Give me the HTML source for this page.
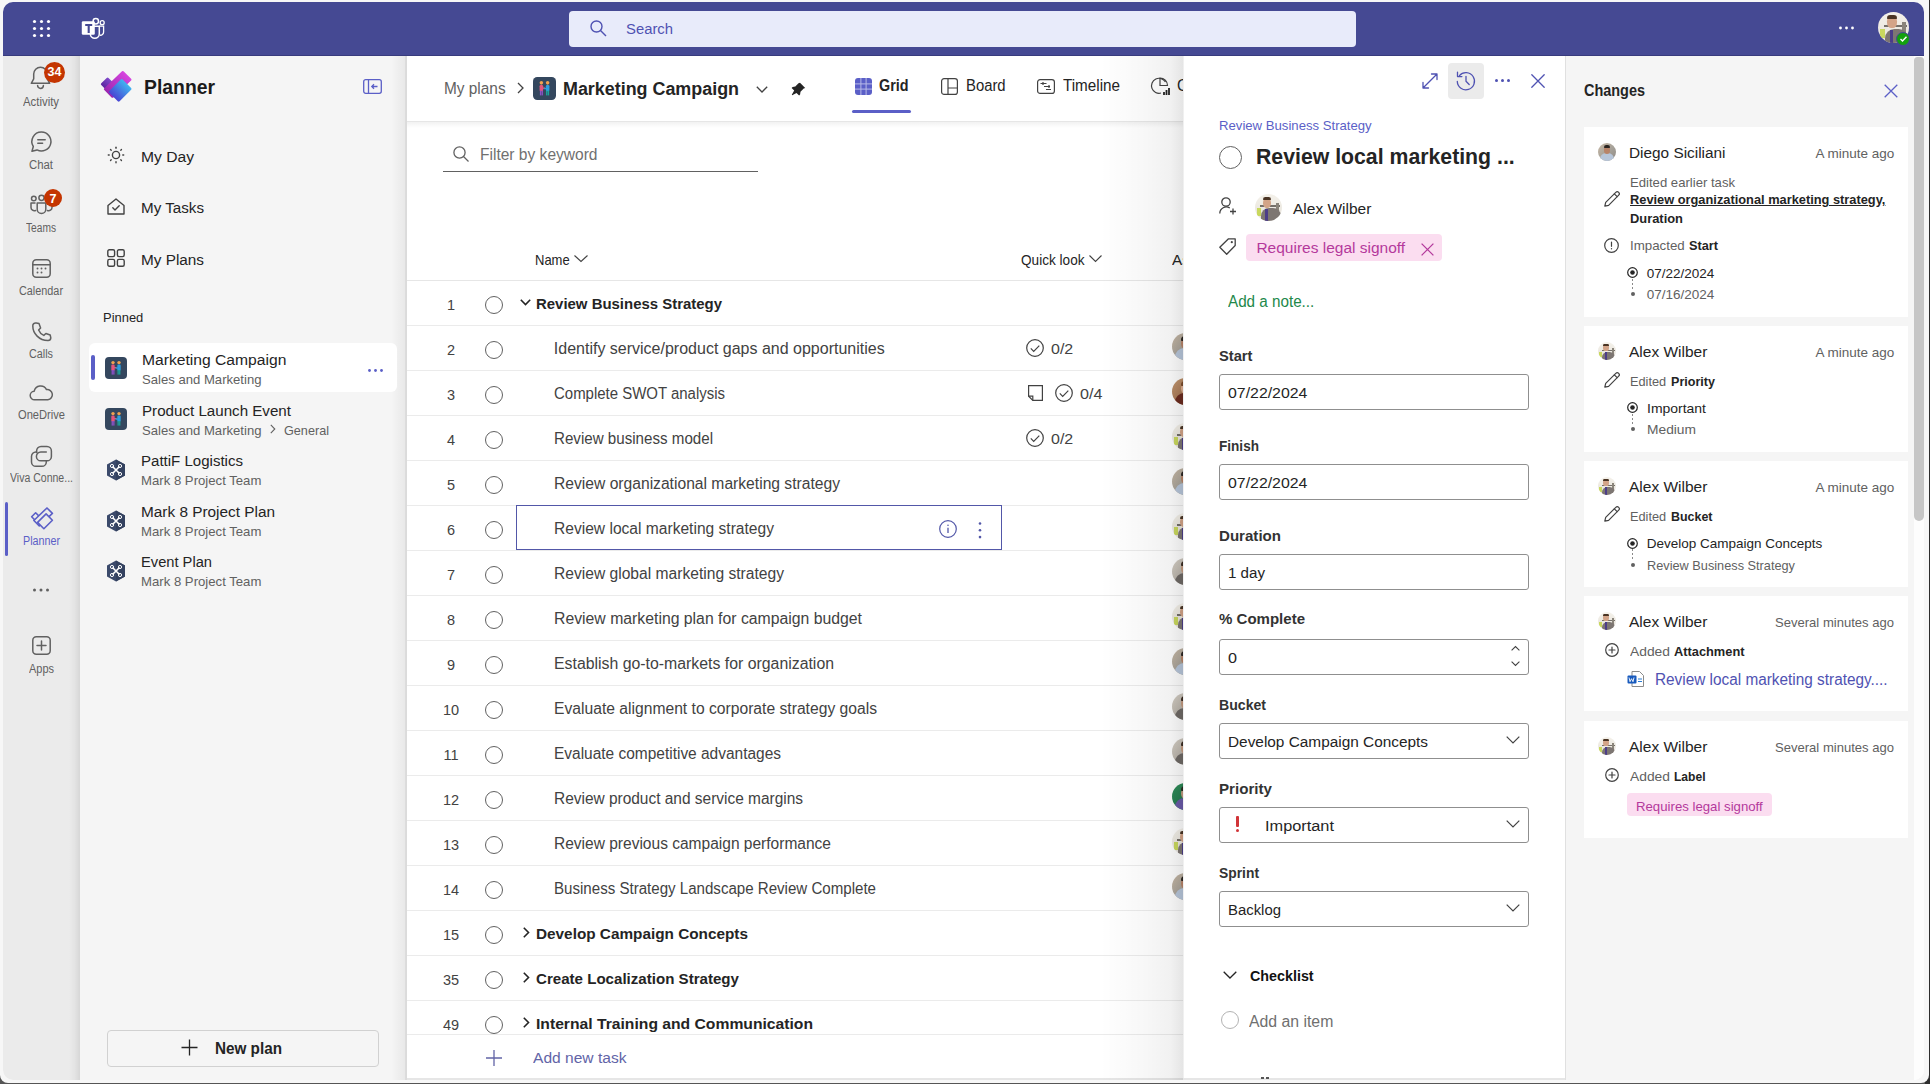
<!DOCTYPE html>
<html><head><meta charset="utf-8">
<style>
*{box-sizing:border-box;margin:0;padding:0}
html,body{width:1930px;height:1084px;overflow:hidden}
body{position:relative;background:#f7f7f7;font-family:"Liberation Sans",sans-serif;color:#242424}
.a{position:absolute}
.t{position:absolute;white-space:nowrap;line-height:1;transform-origin:0 0}
svg{position:absolute;overflow:visible}
</style></head><body>

<div class="a" style="left:0px;top:0px;width:1930px;height:1084px;background:#555"></div>
<div class="a" style="left:1925px;top:0px;width:5px;height:1084px;background:#2e2e2e"></div>
<div class="a" style="left:0px;top:0px;width:1929px;height:1083px;background:#f7f7f7;border-radius:0 0 8px 8px"></div>
<div class="a" style="left:3px;top:2px;width:1921px;height:1078px;border-radius:10px;overflow:hidden;background:#fff">
<div class="a" style="left:0px;top:0px;width:1921px;height:53px;background:#454993"></div>
<div class="a" style="left:0px;top:53px;width:1921px;height:1px;background:#383b7d"></div>
<div class="a" style="left:0px;top:54px;width:77px;height:1024px;background:#ebebeb"></div>
<div class="a" style="left:66px;top:54px;width:11px;height:1024px;background:linear-gradient(90deg,rgba(0,0,0,0),rgba(0,0,0,.03) 50%,rgba(0,0,0,.085))"></div>
<div class="a" style="left:77px;top:54px;width:327px;height:1024px;background:#f5f5f5"></div>
<div class="a" style="left:388px;top:54px;width:16px;height:1024px;background:linear-gradient(90deg,rgba(0,0,0,0),rgba(0,0,0,.06))"></div>
<div class="a" style="left:402px;top:54px;width:2px;height:1024px;background:rgba(0,0,0,.05)"></div>
<div class="a" style="left:404px;top:54px;width:776px;height:1024px;background:#fff"></div>
<div class="a" style="left:1562px;top:54px;width:349px;height:1024px;background:#f5f5f5"></div>
<div class="a" style="left:1562px;top:54px;width:1px;height:1024px;background:#e0e0e0"></div>
<div class="a" style="left:1911px;top:54px;width:10px;height:1024px;background:#fdfdfd"></div>
<div class="a" style="left:1911px;top:55px;width:10px;height:464px;background:#c6c6c6;border-radius:3.5px 3.5px 5px 5px"></div>
</div>
<svg style="left:33px;top:20px" width="17" height="17" viewBox="0 0 17 17" ><circle cx="1.5" cy="1.5" r="1.6" fill="#fff"/><circle cx="1.5" cy="8.5" r="1.6" fill="#fff"/><circle cx="1.5" cy="15.5" r="1.6" fill="#fff"/><circle cx="8.5" cy="1.5" r="1.6" fill="#fff"/><circle cx="8.5" cy="8.5" r="1.6" fill="#fff"/><circle cx="8.5" cy="15.5" r="1.6" fill="#fff"/><circle cx="15.5" cy="1.5" r="1.6" fill="#fff"/><circle cx="15.5" cy="8.5" r="1.6" fill="#fff"/><circle cx="15.5" cy="15.5" r="1.6" fill="#fff"/></svg>
<svg style="left:80px;top:17px" width="25" height="23" viewBox="0 0 25 23" fill="none"><circle cx="15.8" cy="4.2" r="2.7" stroke="#fff" stroke-width="1.5"/><circle cx="22.2" cy="5.7" r="2" stroke="#fff" stroke-width="1.3"/>
<path d="M14 9.2H19.3V16.8A4.5 4.5 0 0 1 10.3 16.8" stroke="#fff" stroke-width="1.5"/><path d="M19.3 9.2H23.6V15A3.2 3.2 0 0 1 19.8 18.2" stroke="#fff" stroke-width="1.3"/>
<rect x="1.8" y="4.3" width="13" height="13.5" rx="1.3" fill="#fff"/><path d="M5.2 8H12.2M8.7 8V16" stroke="#454993" stroke-width="2.1"/></svg>
<div class="a" style="left:569px;top:11px;width:787px;height:36px;background:#e8ebfa;border-radius:4px"></div>
<svg style="left:590px;top:20px" width="17" height="17" viewBox="0 0 17 17" fill="none"><circle cx="6.5" cy="6.5" r="5.5" stroke="#4f52b2" stroke-width="1.4"/><path d="M10.5 10.5l5.5 5.5" stroke="#4f52b2" stroke-width="1.4"/></svg>
<div class="t" style="left:626.0px;top:20.9px;font-size:15.5px;color:#4f52b2;font-weight:400;transform:scaleX(0.9567);">Search</div>
<svg style="left:1839px;top:26px" width="15" height="4" viewBox="0 0 15 4" fill="none"><circle cx="1.5" cy="2" r="1.4" fill="#fff"/><circle cx="7.5" cy="2" r="1.4" fill="#fff"/><circle cx="13.5" cy="2" r="1.4" fill="#fff"/></svg>
<div class="a" style="left:1878px;top:12px;width:31px;height:31px;border-radius:50%;overflow:hidden;background:linear-gradient(180deg,#f4f1ea,#e6e2da)"><div class="a" style="left:2.1px;top:16.5px;width:5.2px;height:9.3px;background:#c9d85e"></div><div class="a" style="left:6.2px;top:12.9px;width:22.7px;height:2.3px;background:#75706a"></div><div class="a" style="left:23.8px;top:10.3px;width:4.1px;height:12.4px;background:#8a847a"></div><div class="a" style="left:7.2px;top:16.5px;width:22.7px;height:16.5px;background:#7d7672;border-radius:9.3px 9.3px 0 0"></div><div class="a" style="left:11.9px;top:17.6px;width:3.3px;height:13.4px;background:#4c3d88"></div><div class="a" style="left:9.3px;top:4.1px;width:9.3px;height:11.9px;background:#d3a488;border-radius:45%"></div><div class="a" style="left:9.3px;top:3.1px;width:9.3px;height:4.1px;background:#4a3424;border-radius:4.1px 4.1px 1px 1px"></div></div>
<div class="a" style="left:1896px;top:32px;width:14px;height:14px;background:#13a10e;border-radius:50%;border:1.5px solid #454993"></div>
<svg style="left:1900px;top:36px" width="7" height="6" viewBox="0 0 7 6" fill="none"><path d="M0.5 3l2 2 4-4.2" stroke="#fff" stroke-width="1.4"/></svg>
<svg style="left:30px;top:66px" width="21" height="23" viewBox="0 0 21 23" fill="none"><path d="M10.5 1.2a6.8 6.8 0 0 0-6.8 6.8v4.8L1.3 17.3h18.4l-2.4-4.5V8a6.8 6.8 0 0 0-6.8-6.8z" stroke="#616161" stroke-width="1.5" stroke-linejoin="round" stroke-linecap="round"/><path d="M7.6 19.5a2.9 2.9 0 0 0 5.8 0" stroke="#616161" stroke-width="1.5" stroke-linejoin="round" stroke-linecap="round"/></svg>
<div class="a" style="left:44px;top:62px;width:21px;height:21px;background:#c43501;border-radius:50%"></div>
<div class="t" style="left:47.5px;top:66.4px;font-size:12.5px;color:#fff;font-weight:700;">34</div>
<div class="t" style="left:23.0px;top:96.1px;font-size:12.3px;color:#616161;font-weight:400;transform:scaleX(0.9242);">Activity</div>
<svg style="left:31px;top:131px" width="21" height="21" viewBox="0 0 21 21" fill="none"><path d="M10.5 1a9.5 9.5 0 1 1-4.5 17.9L1 20.2l1.3-4.7A9.5 9.5 0 0 1 10.5 1z" stroke="#616161" stroke-width="1.5" stroke-linejoin="round" stroke-linecap="round"/><path d="M6.8 8.8h7.4M6.8 12.3h4.8" stroke="#616161" stroke-width="1.5" stroke-linejoin="round" stroke-linecap="round"/></svg>
<div class="t" style="left:29.0px;top:159.1px;font-size:12.3px;color:#616161;font-weight:400;transform:scaleX(0.9236);">Chat</div>
<svg style="left:30px;top:195px" width="23" height="20" viewBox="0 0 23 20" fill="none"><circle cx="3.8" cy="3.5" r="2.3" stroke="#616161" stroke-width="1.5" stroke-linejoin="round" stroke-linecap="round"/><circle cx="11.5" cy="2.8" r="2.6" stroke="#616161" stroke-width="1.5" stroke-linejoin="round" stroke-linecap="round"/><path d="M7.2 8h8.6v6.2a4.3 4.3 0 0 1-8.6 0z" stroke="#616161" stroke-width="1.5" stroke-linejoin="round" stroke-linecap="round"/><path d="M5 8H1v4.5a3.3 3.3 0 0 0 4.6 3" stroke="#616161" stroke-width="1.5" stroke-linejoin="round" stroke-linecap="round"/><path d="M18 8h4v4.5a3.3 3.3 0 0 1-4.6 3" stroke="#616161" stroke-width="1.5" stroke-linejoin="round" stroke-linecap="round"/></svg>
<div class="a" style="left:44px;top:189px;width:18px;height:18px;background:#c43501;border-radius:50%"></div>
<div class="t" style="left:49.5px;top:192.9px;font-size:12.5px;color:#fff;font-weight:700;">7</div>
<div class="t" style="left:26.0px;top:222.1px;font-size:12.3px;color:#616161;font-weight:400;transform:scaleX(0.8283);">Teams</div>
<svg style="left:32px;top:259px" width="19" height="19" viewBox="0 0 19 19" fill="none"><rect x="0.8" y="0.8" width="17.4" height="17.4" rx="3.5" stroke="#616161" stroke-width="1.5" stroke-linejoin="round" stroke-linecap="round"/><path d="M0.8 5.8h17.4" stroke="#616161" stroke-width="1.5" stroke-linejoin="round" stroke-linecap="round"/><circle cx="5.5" cy="9.5" r=".95" fill="#616161"/><circle cx="9.5" cy="9.5" r=".95" fill="#616161"/><circle cx="13.5" cy="9.5" r=".95" fill="#616161"/><circle cx="5.5" cy="13.5" r=".95" fill="#616161"/><circle cx="9.5" cy="13.5" r=".95" fill="#616161"/></svg>
<div class="t" style="left:19.0px;top:285.1px;font-size:12.3px;color:#616161;font-weight:400;transform:scaleX(0.8817);">Calendar</div>
<svg style="left:32px;top:322px" width="19" height="20" viewBox="0 0 19 20" fill="none"><path d="M4.2 1l2.8.6 1.6 4.3-2 2.1a10 10 0 0 0 5.2 5.4l2.1-1.9 4.3 1.5.6 2.9a2.8 2.8 0 0 1-2.9 2.6C7.3 18.5 0.8 11.6 0.8 4a2.8 2.8 0 0 1 3.4-3z" stroke="#616161" stroke-width="1.5" stroke-linejoin="round" stroke-linecap="round"/></svg>
<div class="t" style="left:29.0px;top:348.1px;font-size:12.3px;color:#616161;font-weight:400;transform:scaleX(0.8777);">Calls</div>
<svg style="left:29px;top:385px" width="24" height="16" viewBox="0 0 24 16" fill="none"><path d="M5.8 14.8a4.3 4.3 0 0 1-.6-8.6A6.6 6.6 0 0 1 17.5 4.6a5.1 5.1 0 0 1 1.4 10.2z" stroke="#616161" stroke-width="1.5" stroke-linejoin="round" stroke-linecap="round"/></svg>
<div class="t" style="left:17.5px;top:409.1px;font-size:12.3px;color:#616161;font-weight:400;transform:scaleX(0.9047);">OneDrive</div>
<svg style="left:31px;top:446px" width="21" height="21" viewBox="0 0 21 21" fill="none"><path d="M5.6 6.5V4.9A4.4 4.4 0 0 1 10 0.5H16A4.4 4.4 0 0 1 20.4 4.9V10.4A4.4 4.4 0 0 1 16 14.8H9.8A4.4 4.4 0 0 1 9.8 6H15.3" stroke="#616161" stroke-width="1.5" stroke-linejoin="round" stroke-linecap="round"/><path d="M15.3 14.8V15.9A4.4 4.4 0 0 1 10.9 20.3H4.9A4.4 4.4 0 0 1 0.5 15.9V10.4A4.4 4.4 0 0 1 4.9 6H5.6" stroke="#616161" stroke-width="1.5" stroke-linejoin="round" stroke-linecap="round"/></svg>
<div class="t" style="left:9.5px;top:472.1px;font-size:12.3px;color:#616161;font-weight:400;transform:scaleX(0.8559);">Viva Conne...</div>
<div class="a" style="left:5px;top:502px;width:3px;height:54px;background:#5b5fc7;border-radius:2px"></div>
<svg style="left:30px;top:507px" width="24" height="24" viewBox="0 0 24 24" fill="none"><path d="M1.63 9.79L5.64 5.79L10.76 10.91L6.75 14.91z" fill="#ebebeb" stroke="#5b5fc7" stroke-width="1.6" stroke-linejoin="round" stroke-linecap="round"/><path d="M3.86 13.50L16.99 0.96L22.41 6.38L9.27 18.92z" fill="#ebebeb" stroke="#5b5fc7" stroke-width="1.6" stroke-linejoin="round" stroke-linecap="round"/><path d="M7.57 15.43L16.10 6.90L22.41 13.21L13.87 21.74z" fill="#ebebeb" stroke="#5b5fc7" stroke-width="1.6" stroke-linejoin="round" stroke-linecap="round"/></svg>
<div class="t" style="left:22.5px;top:535.1px;font-size:12.3px;color:#5b5fc7;font-weight:400;transform:scaleX(0.8728);">Planner</div>
<svg style="left:33px;top:588px" width="16" height="4" viewBox="0 0 16 4" fill="none"><circle cx="1.5" cy="2" r="1.5" fill="#616161"/><circle cx="8.0" cy="2" r="1.5" fill="#616161"/><circle cx="14.5" cy="2" r="1.5" fill="#616161"/></svg>
<svg style="left:32px;top:636px" width="19" height="19" viewBox="0 0 19 19" fill="none"><rect x="0.8" y="0.8" width="17.4" height="17.4" rx="3.5" stroke="#616161" stroke-width="1.5" stroke-linejoin="round" stroke-linecap="round"/><path d="M9.5 5v9M5 9.5h9" stroke="#616161" stroke-width="1.5" stroke-linejoin="round" stroke-linecap="round"/></svg>
<div class="t" style="left:28.5px;top:663.1px;font-size:12.3px;color:#616161;font-weight:400;transform:scaleX(0.8919);">Apps</div>
<svg style="left:100px;top:71px" width="32" height="31" viewBox="0 0 32 31" ><defs>
<linearGradient id="pl1" x1="0" y1="1" x2="1" y2="0"><stop offset="0" stop-color="#4e1a8f"/><stop offset="1" stop-color="#8f55dc"/></linearGradient>
<linearGradient id="pl2" x1="0" y1="1" x2="1" y2="0"><stop offset="0" stop-color="#9121a8"/><stop offset="1" stop-color="#e04ae6"/></linearGradient>
<linearGradient id="pl3" x1="0" y1="1" x2="1" y2="0"><stop offset="0" stop-color="#4a28cc"/><stop offset="1" stop-color="#3fd0f8"/></linearGradient>
</defs>
<path d="M2.2 13.2L7.6 7.8L14.5 14.7L9.1 20.1z" fill="url(#pl1)" stroke="url(#pl1)" stroke-width="2.6" stroke-linejoin="round"/>
<path d="M5.2 18.2L22.9 1.3L30.2 8.6L12.5 25.5z" fill="url(#pl2)" stroke="url(#pl2)" stroke-width="2.6" stroke-linejoin="round"/>
<path d="M10.2 20.8L21.7 9.3L30.2 17.8L18.7 29.3z" fill="url(#pl3)" stroke="url(#pl3)" stroke-width="2.6" stroke-linejoin="round"/></svg>
<div class="t" style="left:144.0px;top:78.2px;font-size:19.5px;color:#1b1b1b;font-weight:700;transform:scaleX(0.9926);">Planner</div>
<svg style="left:363px;top:79px" width="19" height="15" viewBox="0 0 19 15" fill="none"><rect x="0.7" y="0.7" width="17.6" height="13.6" rx="2" stroke="#5b5fc7" stroke-width="1.3"/><path d="M5.5 1v13" stroke="#5b5fc7" stroke-width="1.3"/><path d="M14.5 7.5H9M11 5.3l-2.2 2.2 2.2 2.2" stroke="#5b5fc7" stroke-width="1.3"/></svg>
<svg style="left:107px;top:146px" width="18" height="18" viewBox="0 0 18 18" fill="none"><circle cx="9" cy="9" r="3.6" stroke="#424242" stroke-width="1.4" stroke-linecap="round" stroke-linejoin="round"/><path d="M15.80 9.00l0.90 0.00" stroke="#424242" stroke-width="1.4" stroke-linecap="round" stroke-linejoin="round"/><path d="M2.20 9.00l-0.90 0.00" stroke="#424242" stroke-width="1.4" stroke-linecap="round" stroke-linejoin="round"/><path d="M9.00 15.80l0.00 0.90" stroke="#424242" stroke-width="1.4" stroke-linecap="round" stroke-linejoin="round"/><path d="M9.00 2.20l0.00 -0.90" stroke="#424242" stroke-width="1.4" stroke-linecap="round" stroke-linejoin="round"/><path d="M13.81 13.81l0.64 0.64" stroke="#424242" stroke-width="1.4" stroke-linecap="round" stroke-linejoin="round"/><path d="M4.19 13.81l-0.64 0.64" stroke="#424242" stroke-width="1.4" stroke-linecap="round" stroke-linejoin="round"/><path d="M13.81 4.19l0.64 -0.64" stroke="#424242" stroke-width="1.4" stroke-linecap="round" stroke-linejoin="round"/><path d="M4.19 4.19l-0.64 -0.64" stroke="#424242" stroke-width="1.4" stroke-linecap="round" stroke-linejoin="round"/></svg>
<div class="t" style="left:141.0px;top:148.9px;font-size:15.5px;color:#242424;font-weight:400;transform:scaleX(1.0086);">My Day</div>
<svg style="left:107px;top:198px" width="18" height="17" viewBox="0 0 18 17" fill="none"><path d="M1 7.5L9 1l8 6.5V16H1z" stroke="#424242" stroke-width="1.4" stroke-linecap="round" stroke-linejoin="round"/><path d="M5.8 9.8l2.2 2.2 4.2-4.2" stroke="#424242" stroke-width="1.4" stroke-linecap="round" stroke-linejoin="round"/></svg>
<div class="t" style="left:141.0px;top:199.9px;font-size:15.5px;color:#242424;font-weight:400;transform:scaleX(0.9796);">My Tasks</div>
<svg style="left:107px;top:249px" width="18" height="18" viewBox="0 0 18 18" fill="none"><rect x="0.8" y="0.8" width="6.8" height="6.8" rx="1.5" stroke="#424242" stroke-width="1.4" stroke-linecap="round" stroke-linejoin="round"/><rect x="10.4" y="0.8" width="6.8" height="6.8" rx="1.5" stroke="#424242" stroke-width="1.4" stroke-linecap="round" stroke-linejoin="round"/><rect x="0.8" y="10.4" width="6.8" height="6.8" rx="1.5" stroke="#424242" stroke-width="1.4" stroke-linecap="round" stroke-linejoin="round"/><rect x="10.4" y="10.4" width="6.8" height="6.8" rx="1.5" stroke="#424242" stroke-width="1.4" stroke-linecap="round" stroke-linejoin="round"/></svg>
<div class="t" style="left:141.0px;top:251.9px;font-size:15.5px;color:#242424;font-weight:400;transform:scaleX(0.9882);">My Plans</div>
<div class="t" style="left:103.0px;top:310.8px;font-size:13px;color:#242424;font-weight:400;transform:scaleX(0.9954);">Pinned</div>
<div class="a" style="left:89px;top:343px;width:308px;height:49px;background:#fff;border-radius:6px"></div>
<div class="a" style="left:91px;top:355px;width:4px;height:25px;background:#5b5fc7;border-radius:2px"></div>
<svg style="left:105px;top:357px" width="22" height="22" viewBox="0 0 22 22" fill="none"><rect x="0" y="0" width="22" height="22" rx="4" fill="#34475e"/>
<circle cx="8" cy="5.6" r="1.7" fill="#f2a24e"/><circle cx="14" cy="5.6" r="1.7" fill="#f2a24e"/>
<rect x="6.3" y="7.6" width="3.4" height="6" rx="1.2" fill="#e2557d"/><rect x="9" y="10" width="2.6" height="1.3" fill="#e2557d"/>
<rect x="6.6" y="13" width="1.3" height="4.6" fill="#8c52c8"/><rect x="8.2" y="13" width="1.3" height="4.6" fill="#8c52c8"/>
<rect x="12.3" y="7.6" width="3.4" height="6" rx="1.2" fill="#2e9ee0"/><rect x="10.6" y="10.4" width="2.4" height="1.3" fill="#2e9ee0"/>
<rect x="12.5" y="13" width="1.3" height="4.6" fill="#1ba59c"/><rect x="14.1" y="13" width="1.3" height="4.6" fill="#1ba59c"/></svg>
<div class="t" style="left:141.5px;top:351.9px;font-size:15.5px;color:#242424;font-weight:400;transform:scaleX(1.0097);">Marketing Campaign</div>
<div class="t" style="left:141.5px;top:372.6px;font-size:13px;color:#616161;font-weight:400;transform:scaleX(1.0083);">Sales and Marketing</div>
<svg style="left:368px;top:369px" width="15" height="3" viewBox="0 0 15 3" fill="none"><circle cx="1.5" cy="1.5" r="1.4" fill="#5b5fc7"/><circle cx="7.5" cy="1.5" r="1.4" fill="#5b5fc7"/><circle cx="13.5" cy="1.5" r="1.4" fill="#5b5fc7"/></svg>
<svg style="left:105px;top:408px" width="22" height="22" viewBox="0 0 22 22" fill="none"><rect x="0" y="0" width="22" height="22" rx="4" fill="#34475e"/>
<circle cx="8" cy="5.6" r="1.7" fill="#f2a24e"/><circle cx="14" cy="5.6" r="1.7" fill="#f2a24e"/>
<rect x="6.3" y="7.6" width="3.4" height="6" rx="1.2" fill="#e2557d"/><rect x="9" y="10" width="2.6" height="1.3" fill="#e2557d"/>
<rect x="6.6" y="13" width="1.3" height="4.6" fill="#8c52c8"/><rect x="8.2" y="13" width="1.3" height="4.6" fill="#8c52c8"/>
<rect x="12.3" y="7.6" width="3.4" height="6" rx="1.2" fill="#2e9ee0"/><rect x="10.6" y="10.4" width="2.4" height="1.3" fill="#2e9ee0"/>
<rect x="12.5" y="13" width="1.3" height="4.6" fill="#1ba59c"/><rect x="14.1" y="13" width="1.3" height="4.6" fill="#1ba59c"/></svg>
<div class="t" style="left:141.5px;top:402.9px;font-size:15.5px;color:#242424;font-weight:400;transform:scaleX(0.9768);">Product Launch Event</div>
<div class="t" style="left:141.5px;top:423.6px;font-size:13px;color:#616161;font-weight:400;transform:scaleX(1.0083);">Sales and Marketing</div>
<svg style="left:270px;top:424px" width="6" height="10" viewBox="0 0 6 10" fill="none"><path d="M0.8 0.8l4 4.2-4 4.2" stroke="#616161" stroke-width="1.1"/></svg>
<div class="t" style="left:283.5px;top:423.6px;font-size:13px;color:#616161;font-weight:400;transform:scaleX(0.9730);">General</div>
<svg style="left:106px;top:459.0px" width="20" height="22" viewBox="0 0 20 22" fill="none"><path d="M10 0.5l9 5v11l-9 5-9-5v-11z" fill="#3b4a6b"/><path d="M10 0.5l9 5v11l-9 5z" fill="#33415f"/>
<path d="M6.5 7.5l7 7M13.5 7.5l-7 7" stroke="#fff" stroke-width="1.6"/>
<circle cx="6" cy="7" r="1.6" stroke="#fff" stroke-width="1"/><circle cx="14" cy="7" r="1.6" stroke="#fff" stroke-width="1"/><circle cx="6" cy="15" r="1.6" stroke="#fff" stroke-width="1"/><circle cx="14" cy="15" r="1.6" stroke="#fff" stroke-width="1"/></svg>
<div class="t" style="left:141.3px;top:453.2px;font-size:15.5px;color:#242424;font-weight:400;transform:scaleX(0.9704);">PattiF Logistics</div>
<div class="t" style="left:141.3px;top:474.1px;font-size:13px;color:#616161;font-weight:400;transform:scaleX(1.0120);">Mark 8 Project Team</div>
<svg style="left:106px;top:509.6px" width="20" height="22" viewBox="0 0 20 22" fill="none"><path d="M10 0.5l9 5v11l-9 5-9-5v-11z" fill="#3b4a6b"/><path d="M10 0.5l9 5v11l-9 5z" fill="#33415f"/>
<path d="M6.5 7.5l7 7M13.5 7.5l-7 7" stroke="#fff" stroke-width="1.6"/>
<circle cx="6" cy="7" r="1.6" stroke="#fff" stroke-width="1"/><circle cx="14" cy="7" r="1.6" stroke="#fff" stroke-width="1"/><circle cx="6" cy="15" r="1.6" stroke="#fff" stroke-width="1"/><circle cx="14" cy="15" r="1.6" stroke="#fff" stroke-width="1"/></svg>
<div class="t" style="left:141.3px;top:503.8px;font-size:15.5px;color:#242424;font-weight:400;transform:scaleX(0.9908);">Mark 8 Project Plan</div>
<div class="t" style="left:141.3px;top:524.7px;font-size:13px;color:#616161;font-weight:400;transform:scaleX(1.0120);">Mark 8 Project Team</div>
<svg style="left:106px;top:560.2px" width="20" height="22" viewBox="0 0 20 22" fill="none"><path d="M10 0.5l9 5v11l-9 5-9-5v-11z" fill="#3b4a6b"/><path d="M10 0.5l9 5v11l-9 5z" fill="#33415f"/>
<path d="M6.5 7.5l7 7M13.5 7.5l-7 7" stroke="#fff" stroke-width="1.6"/>
<circle cx="6" cy="7" r="1.6" stroke="#fff" stroke-width="1"/><circle cx="14" cy="7" r="1.6" stroke="#fff" stroke-width="1"/><circle cx="6" cy="15" r="1.6" stroke="#fff" stroke-width="1"/><circle cx="14" cy="15" r="1.6" stroke="#fff" stroke-width="1"/></svg>
<div class="t" style="left:141.3px;top:554.4px;font-size:15.5px;color:#242424;font-weight:400;transform:scaleX(0.9471);">Event Plan</div>
<div class="t" style="left:141.3px;top:575.3px;font-size:13px;color:#616161;font-weight:400;transform:scaleX(1.0120);">Mark 8 Project Team</div>
<div class="a" style="left:107px;top:1030px;width:272px;height:37px;border:1px solid #d1d1d1;border-radius:4px;background:#f5f5f5"></div>
<svg style="left:181px;top:1039px" width="17" height="17" viewBox="0 0 17 17" fill="none"><path d="M8.5 0.5v16M0.5 8.5h16" stroke="#242424" stroke-width="1.3"/></svg>
<div class="t" style="left:215.0px;top:1041.0px;font-size:16px;color:#242424;font-weight:700;transform:scaleX(0.9539);">New plan</div>
<div class="a" style="left:407px;top:121px;width:776px;height:1px;background:#e6e6e6"></div>
<div class="a" style="left:407px;top:122px;width:776px;height:6px;background:linear-gradient(180deg,rgba(0,0,0,.05),rgba(0,0,0,0))"></div>
<div class="t" style="left:443.9px;top:81.0px;font-size:16px;color:#616161;font-weight:400;transform:scaleX(0.9620);">My plans</div>
<svg style="left:517px;top:82px" width="7" height="12" viewBox="0 0 7 12" fill="none"><path d="M1 1l5 5-5 5" stroke="#424242" stroke-width="1.3"/></svg>
<svg style="left:533px;top:77px" width="23" height="23" viewBox="0 0 22 22" fill="none"><rect x="0" y="0" width="22" height="22" rx="4" fill="#34475e"/>
<circle cx="8" cy="5.6" r="1.7" fill="#f2a24e"/><circle cx="14" cy="5.6" r="1.7" fill="#f2a24e"/>
<rect x="6.3" y="7.6" width="3.4" height="6" rx="1.2" fill="#e2557d"/><rect x="9" y="10" width="2.6" height="1.3" fill="#e2557d"/>
<rect x="6.6" y="13" width="1.3" height="4.6" fill="#8c52c8"/><rect x="8.2" y="13" width="1.3" height="4.6" fill="#8c52c8"/>
<rect x="12.3" y="7.6" width="3.4" height="6" rx="1.2" fill="#2e9ee0"/><rect x="10.6" y="10.4" width="2.4" height="1.3" fill="#2e9ee0"/>
<rect x="12.5" y="13" width="1.3" height="4.6" fill="#1ba59c"/><rect x="14.1" y="13" width="1.3" height="4.6" fill="#1ba59c"/></svg>
<div class="t" style="left:562.6px;top:79.7px;font-size:18px;color:#242424;font-weight:700;transform:scaleX(0.9942);">Marketing Campaign</div>
<svg style="left:756px;top:86px" width="12" height="7" viewBox="0 0 12 7" fill="none"><path d="M0.8 0.8l5.2 5.2 5.2-5.2" stroke="#424242" stroke-width="1.3"/></svg>
<svg style="left:791px;top:82px" width="15" height="14" viewBox="0 0 15 14" fill="none"><path d="M9 0.8l5.2 5.2-1.5 0.6-3.2 3.2-0.4 2.7-1 1-2.6-2.6L1.2 13.2 0.8 12.8l2.4-4.3L0.6 5.9l1-1 2.7-0.4 3.2-3.2z" fill="#242424"/></svg>
<svg style="left:855px;top:78px" width="17" height="17" viewBox="0 0 17 17" fill="none"><rect x="0" y="0" width="17" height="17" rx="3" fill="#5b5fc7"/><path d="M5.9 0v17M11.1 0v17M0 5.9h17M0 11.1h17" stroke="#b9bbe8" stroke-width="1"/></svg>
<div class="t" style="left:879.4px;top:78.3px;font-size:16px;color:#242424;font-weight:700;transform:scaleX(0.8969);">Grid</div>
<div class="a" style="left:852px;top:110px;width:59px;height:3px;background:#5b5fc7;border-radius:1.5px"></div>
<svg style="left:941px;top:78px" width="17" height="17" viewBox="0 0 17 17" fill="none"><rect x="0.6" y="0.6" width="15.8" height="15.8" rx="2.5" stroke="#424242" stroke-width="1.2"/><path d="M7 0.6v15.8M7 10h9.4" stroke="#424242" stroke-width="1.2"/></svg>
<div class="t" style="left:965.7px;top:78.3px;font-size:16px;color:#242424;font-weight:400;transform:scaleX(0.9273);">Board</div>
<svg style="left:1037px;top:79px" width="18" height="15" viewBox="0 0 18 15" fill="none"><rect x="0.6" y="0.6" width="16.8" height="13.8" rx="2.5" stroke="#424242" stroke-width="1.2"/><path d="M3.5 4.5h6M7 7.5h6M9 10.5h5M6 3v3M12 6v3" stroke="#424242" stroke-width="1.2"/></svg>
<div class="t" style="left:1063.0px;top:78.3px;font-size:16px;color:#242424;font-weight:400;transform:scaleX(0.9520);">Timeline</div>
<svg style="left:1152px;top:77px" width="19" height="19" viewBox="0 0 19 19" fill="none"><path d="M13.5 5A7.5 7.5 0 1 0 9 16" stroke="#424242" stroke-width="1.2"/><path d="M8 1v7.5h7.5A7.5 7.5 0 0 0 8 1z" stroke="#424242" stroke-width="1.2"/><path d="M12 18v-3M14.5 18v-5M17 18v-7" stroke="#242424" stroke-width="1.8"/></svg>
<div class="t" style="left:1177.0px;top:78.3px;font-size:16px;color:#242424;font-weight:400;transform:scaleX(0.9549);">Charts</div>
<svg style="left:453px;top:146px" width="16" height="16" viewBox="0 0 16 16" fill="none"><circle cx="6.5" cy="6.5" r="5.6" stroke="#616161" stroke-width="1.3"/><path d="M10.5 10.5l5 5" stroke="#616161" stroke-width="1.3"/></svg>
<div class="t" style="left:479.8px;top:146.8px;font-size:16px;color:#707070;font-weight:400;transform:scaleX(0.9717);">Filter by keyword</div>
<div class="a" style="left:443px;top:171px;width:315px;height:1px;background:#616161"></div>
<div class="t" style="left:535.3px;top:252.6px;font-size:14.5px;color:#242424;font-weight:400;transform:scaleX(0.8969);">Name</div>
<svg style="left:574px;top:255px" width="14" height="7" viewBox="0 0 14 7" fill="none"><path d="M0.5 0.5l6.5 6 6.5-6" stroke="#424242" stroke-width="1.1"/></svg>
<div class="t" style="left:1020.7px;top:252.7px;font-size:14.5px;color:#242424;font-weight:400;transform:scaleX(0.9379);">Quick look</div>
<svg style="left:1089px;top:255px" width="13" height="7" viewBox="0 0 13 7" fill="none"><path d="M0.5 0.5l6 6 6-6" stroke="#424242" stroke-width="1.1"/></svg>
<div class="t" style="left:1171.8px;top:252.7px;font-size:14.5px;color:#242424;font-weight:400;transform:scaleX(1.0557);">Assigned to</div>
<div class="a" style="left:407px;top:280px;width:776px;height:1px;background:#e6e6e6"></div>
<div class="a" style="left:407px;top:325px;width:776px;height:1px;background:#ebebeb"></div>
<div class="t" style="left:447.0px;top:297.7px;font-size:14.5px;color:#424242;font-weight:400;">1</div>
<div class="a" style="left:485px;top:296px;width:18px;height:18px;border-radius:50%;border:1.3px solid #616161"></div>
<svg style="left:520px;top:299px" width="11" height="7" viewBox="0 0 11 7" fill="none"><path d="M0.8 0.8l4.7 4.7 4.7-4.7" stroke="#242424" stroke-width="1.6"/></svg>
<div class="t" style="left:535.6px;top:295.7px;font-size:15.5px;color:#242424;font-weight:700;transform:scaleX(0.9638);">Review Business Strategy</div>
<div class="a" style="left:407px;top:370px;width:776px;height:1px;background:#ebebeb"></div>
<div class="t" style="left:447.0px;top:342.7px;font-size:14.5px;color:#424242;font-weight:400;">2</div>
<div class="a" style="left:485px;top:341px;width:18px;height:18px;border-radius:50%;border:1.3px solid #616161"></div>
<div class="t" style="left:553.8px;top:340.5px;font-size:16px;color:#424242;font-weight:400;">Identify service/product gaps and opportunities</div>
<div class="a" style="left:1172px;top:333px;width:27px;height:27px;border-radius:50%;overflow:hidden;background:linear-gradient(135deg,#c9b9a5 0%,#a8a39a 50%,#8f8b86 100%)"><div class="a" style="left:2.7px;top:15.3px;width:21.6px;height:14.4px;background:#b7c6da;border-radius:9.0px 9.0px 0 0"></div><div class="a" style="left:8.6px;top:4.5px;width:9.9px;height:11.7px;background:#b88469;border-radius:45%"></div><div class="a" style="left:8.6px;top:3.1px;width:9.9px;height:4.5px;background:#2a2420;border-radius:4.5px 4.5px 1px 1px"></div></div>
<div class="a" style="left:407px;top:415px;width:776px;height:1px;background:#ebebeb"></div>
<div class="t" style="left:447.0px;top:387.7px;font-size:14.5px;color:#424242;font-weight:400;">3</div>
<div class="a" style="left:485px;top:386px;width:18px;height:18px;border-radius:50%;border:1.3px solid #616161"></div>
<div class="t" style="left:553.8px;top:385.5px;font-size:16px;color:#424242;font-weight:400;transform:scaleX(0.9351);">Complete SWOT analysis</div>
<div class="a" style="left:1172px;top:378px;width:27px;height:27px;border-radius:50%;overflow:hidden;background:linear-gradient(135deg,#c69a72 0%,#8b5a3c 100%)"><div class="a" style="left:2.7px;top:15.3px;width:21.6px;height:14.4px;background:#6b2c20;border-radius:9.0px 9.0px 0 0"></div><div class="a" style="left:8.6px;top:4.5px;width:9.9px;height:11.7px;background:#e0b195;border-radius:45%"></div><div class="a" style="left:8.6px;top:3.1px;width:9.9px;height:4.5px;background:#7a4a2a;border-radius:4.5px 4.5px 1px 1px"></div></div>
<div class="a" style="left:407px;top:460px;width:776px;height:1px;background:#ebebeb"></div>
<div class="t" style="left:447.0px;top:432.7px;font-size:14.5px;color:#424242;font-weight:400;">4</div>
<div class="a" style="left:485px;top:431px;width:18px;height:18px;border-radius:50%;border:1.3px solid #616161"></div>
<div class="t" style="left:553.8px;top:430.5px;font-size:16px;color:#424242;font-weight:400;transform:scaleX(0.9460);">Review business model</div>
<div class="a" style="left:1172px;top:423px;width:27px;height:27px;border-radius:50%;overflow:hidden;background:linear-gradient(180deg,#f4f1ea,#e6e2da)"><div class="a" style="left:1.8px;top:14.4px;width:4.5px;height:8.1px;background:#c9d85e"></div><div class="a" style="left:5.4px;top:11.2px;width:19.8px;height:2.0px;background:#75706a"></div><div class="a" style="left:20.7px;top:9.0px;width:3.6px;height:10.8px;background:#8a847a"></div><div class="a" style="left:6.3px;top:14.4px;width:19.8px;height:14.4px;background:#7d7672;border-radius:8.1px 8.1px 0 0"></div><div class="a" style="left:10.3px;top:15.3px;width:2.9px;height:11.7px;background:#4c3d88"></div><div class="a" style="left:8.1px;top:3.6px;width:8.1px;height:10.3px;background:#d3a488;border-radius:45%"></div><div class="a" style="left:8.1px;top:2.7px;width:8.1px;height:3.6px;background:#4a3424;border-radius:3.6px 3.6px 1px 1px"></div></div>
<div class="a" style="left:407px;top:505px;width:776px;height:1px;background:#ebebeb"></div>
<div class="t" style="left:447.0px;top:477.7px;font-size:14.5px;color:#424242;font-weight:400;">5</div>
<div class="a" style="left:485px;top:476px;width:18px;height:18px;border-radius:50%;border:1.3px solid #616161"></div>
<div class="t" style="left:553.8px;top:475.5px;font-size:16px;color:#424242;font-weight:400;transform:scaleX(0.9775);">Review organizational marketing strategy</div>
<div class="a" style="left:1172px;top:468px;width:27px;height:27px;border-radius:50%;overflow:hidden;background:linear-gradient(135deg,#c9b9a5 0%,#a8a39a 50%,#8f8b86 100%)"><div class="a" style="left:2.7px;top:15.3px;width:21.6px;height:14.4px;background:#b7c6da;border-radius:9.0px 9.0px 0 0"></div><div class="a" style="left:8.6px;top:4.5px;width:9.9px;height:11.7px;background:#b88469;border-radius:45%"></div><div class="a" style="left:8.6px;top:3.1px;width:9.9px;height:4.5px;background:#2a2420;border-radius:4.5px 4.5px 1px 1px"></div></div>
<div class="a" style="left:407px;top:550px;width:776px;height:1px;background:#ebebeb"></div>
<div class="t" style="left:447.0px;top:522.7px;font-size:14.5px;color:#424242;font-weight:400;">6</div>
<div class="a" style="left:485px;top:521px;width:18px;height:18px;border-radius:50%;border:1.3px solid #616161"></div>
<div class="t" style="left:553.8px;top:520.5px;font-size:16px;color:#424242;font-weight:400;transform:scaleX(0.9740);">Review local marketing strategy</div>
<div class="a" style="left:1172px;top:513px;width:27px;height:27px;border-radius:50%;overflow:hidden;background:linear-gradient(180deg,#f4f1ea,#e6e2da)"><div class="a" style="left:1.8px;top:14.4px;width:4.5px;height:8.1px;background:#c9d85e"></div><div class="a" style="left:5.4px;top:11.2px;width:19.8px;height:2.0px;background:#75706a"></div><div class="a" style="left:20.7px;top:9.0px;width:3.6px;height:10.8px;background:#8a847a"></div><div class="a" style="left:6.3px;top:14.4px;width:19.8px;height:14.4px;background:#7d7672;border-radius:8.1px 8.1px 0 0"></div><div class="a" style="left:10.3px;top:15.3px;width:2.9px;height:11.7px;background:#4c3d88"></div><div class="a" style="left:8.1px;top:3.6px;width:8.1px;height:10.3px;background:#d3a488;border-radius:45%"></div><div class="a" style="left:8.1px;top:2.7px;width:8.1px;height:3.6px;background:#4a3424;border-radius:3.6px 3.6px 1px 1px"></div></div>
<div class="a" style="left:407px;top:595px;width:776px;height:1px;background:#ebebeb"></div>
<div class="t" style="left:447.0px;top:567.7px;font-size:14.5px;color:#424242;font-weight:400;">7</div>
<div class="a" style="left:485px;top:566px;width:18px;height:18px;border-radius:50%;border:1.3px solid #616161"></div>
<div class="t" style="left:553.8px;top:565.5px;font-size:16px;color:#424242;font-weight:400;transform:scaleX(0.9759);">Review global marketing strategy</div>
<div class="a" style="left:1172px;top:558px;width:27px;height:27px;border-radius:50%;overflow:hidden;background:linear-gradient(135deg,#d8d2c8,#9c968e)"><div class="a" style="left:2.7px;top:15.3px;width:21.6px;height:14.4px;background:#6f6a66;border-radius:9.0px 9.0px 0 0"></div><div class="a" style="left:8.6px;top:4.5px;width:9.9px;height:11.7px;background:#c49a80;border-radius:45%"></div><div class="a" style="left:8.6px;top:3.1px;width:9.9px;height:4.5px;background:#3a2a20;border-radius:4.5px 4.5px 1px 1px"></div></div>
<div class="a" style="left:407px;top:640px;width:776px;height:1px;background:#ebebeb"></div>
<div class="t" style="left:447.0px;top:612.7px;font-size:14.5px;color:#424242;font-weight:400;">8</div>
<div class="a" style="left:485px;top:611px;width:18px;height:18px;border-radius:50%;border:1.3px solid #616161"></div>
<div class="t" style="left:553.8px;top:610.5px;font-size:16px;color:#424242;font-weight:400;transform:scaleX(0.9866);">Review marketing plan for campaign budget</div>
<div class="a" style="left:1172px;top:603px;width:27px;height:27px;border-radius:50%;overflow:hidden;background:linear-gradient(180deg,#f4f1ea,#e6e2da)"><div class="a" style="left:1.8px;top:14.4px;width:4.5px;height:8.1px;background:#c9d85e"></div><div class="a" style="left:5.4px;top:11.2px;width:19.8px;height:2.0px;background:#75706a"></div><div class="a" style="left:20.7px;top:9.0px;width:3.6px;height:10.8px;background:#8a847a"></div><div class="a" style="left:6.3px;top:14.4px;width:19.8px;height:14.4px;background:#7d7672;border-radius:8.1px 8.1px 0 0"></div><div class="a" style="left:10.3px;top:15.3px;width:2.9px;height:11.7px;background:#4c3d88"></div><div class="a" style="left:8.1px;top:3.6px;width:8.1px;height:10.3px;background:#d3a488;border-radius:45%"></div><div class="a" style="left:8.1px;top:2.7px;width:8.1px;height:3.6px;background:#4a3424;border-radius:3.6px 3.6px 1px 1px"></div></div>
<div class="a" style="left:407px;top:685px;width:776px;height:1px;background:#ebebeb"></div>
<div class="t" style="left:447.0px;top:657.7px;font-size:14.5px;color:#424242;font-weight:400;">9</div>
<div class="a" style="left:485px;top:656px;width:18px;height:18px;border-radius:50%;border:1.3px solid #616161"></div>
<div class="t" style="left:553.8px;top:655.5px;font-size:16px;color:#424242;font-weight:400;transform:scaleX(0.9901);">Establish go-to-markets for organization</div>
<div class="a" style="left:1172px;top:648px;width:27px;height:27px;border-radius:50%;overflow:hidden;background:linear-gradient(135deg,#c9b9a5 0%,#a8a39a 50%,#8f8b86 100%)"><div class="a" style="left:2.7px;top:15.3px;width:21.6px;height:14.4px;background:#b7c6da;border-radius:9.0px 9.0px 0 0"></div><div class="a" style="left:8.6px;top:4.5px;width:9.9px;height:11.7px;background:#b88469;border-radius:45%"></div><div class="a" style="left:8.6px;top:3.1px;width:9.9px;height:4.5px;background:#2a2420;border-radius:4.5px 4.5px 1px 1px"></div></div>
<div class="a" style="left:407px;top:730px;width:776px;height:1px;background:#ebebeb"></div>
<div class="t" style="left:442.9px;top:702.7px;font-size:14.5px;color:#424242;font-weight:400;">10</div>
<div class="a" style="left:485px;top:701px;width:18px;height:18px;border-radius:50%;border:1.3px solid #616161"></div>
<div class="t" style="left:553.8px;top:700.5px;font-size:16px;color:#424242;font-weight:400;transform:scaleX(0.9789);">Evaluate alignment to corporate strategy goals</div>
<div class="a" style="left:1172px;top:693px;width:27px;height:27px;border-radius:50%;overflow:hidden;background:linear-gradient(135deg,#d8d2c8,#9c968e)"><div class="a" style="left:2.7px;top:15.3px;width:21.6px;height:14.4px;background:#6f6a66;border-radius:9.0px 9.0px 0 0"></div><div class="a" style="left:8.6px;top:4.5px;width:9.9px;height:11.7px;background:#c49a80;border-radius:45%"></div><div class="a" style="left:8.6px;top:3.1px;width:9.9px;height:4.5px;background:#3a2a20;border-radius:4.5px 4.5px 1px 1px"></div></div>
<div class="a" style="left:407px;top:775px;width:776px;height:1px;background:#ebebeb"></div>
<div class="t" style="left:443.5px;top:747.7px;font-size:14.5px;color:#424242;font-weight:400;">11</div>
<div class="a" style="left:485px;top:746px;width:18px;height:18px;border-radius:50%;border:1.3px solid #616161"></div>
<div class="t" style="left:553.8px;top:745.5px;font-size:16px;color:#424242;font-weight:400;transform:scaleX(0.9667);">Evaluate competitive advantages</div>
<div class="a" style="left:1172px;top:738px;width:27px;height:27px;border-radius:50%;overflow:hidden;background:linear-gradient(135deg,#d8d2c8,#9c968e)"><div class="a" style="left:2.7px;top:15.3px;width:21.6px;height:14.4px;background:#6f6a66;border-radius:9.0px 9.0px 0 0"></div><div class="a" style="left:8.6px;top:4.5px;width:9.9px;height:11.7px;background:#c49a80;border-radius:45%"></div><div class="a" style="left:8.6px;top:3.1px;width:9.9px;height:4.5px;background:#3a2a20;border-radius:4.5px 4.5px 1px 1px"></div></div>
<div class="a" style="left:407px;top:820px;width:776px;height:1px;background:#ebebeb"></div>
<div class="t" style="left:442.9px;top:792.7px;font-size:14.5px;color:#424242;font-weight:400;">12</div>
<div class="a" style="left:485px;top:791px;width:18px;height:18px;border-radius:50%;border:1.3px solid #616161"></div>
<div class="t" style="left:553.8px;top:790.5px;font-size:16px;color:#424242;font-weight:400;transform:scaleX(0.9655);">Review product and service margins</div>
<div class="a" style="left:1172px;top:783px;width:27px;height:27px;border-radius:50%;overflow:hidden;background:linear-gradient(135deg,#2f8f5a,#1d6b45)"><div class="a" style="left:2.7px;top:15.3px;width:21.6px;height:14.4px;background:#6a5aa8;border-radius:9.0px 9.0px 0 0"></div><div class="a" style="left:8.6px;top:4.5px;width:9.9px;height:11.7px;background:#c49a80;border-radius:45%"></div><div class="a" style="left:8.6px;top:3.1px;width:9.9px;height:4.5px;background:#2a2a20;border-radius:4.5px 4.5px 1px 1px"></div></div>
<div class="a" style="left:407px;top:865px;width:776px;height:1px;background:#ebebeb"></div>
<div class="t" style="left:442.9px;top:837.7px;font-size:14.5px;color:#424242;font-weight:400;">13</div>
<div class="a" style="left:485px;top:836px;width:18px;height:18px;border-radius:50%;border:1.3px solid #616161"></div>
<div class="t" style="left:553.8px;top:835.5px;font-size:16px;color:#424242;font-weight:400;transform:scaleX(0.9703);">Review previous campaign performance</div>
<div class="a" style="left:1172px;top:828px;width:27px;height:27px;border-radius:50%;overflow:hidden;background:linear-gradient(180deg,#f4f1ea,#e6e2da)"><div class="a" style="left:1.8px;top:14.4px;width:4.5px;height:8.1px;background:#c9d85e"></div><div class="a" style="left:5.4px;top:11.2px;width:19.8px;height:2.0px;background:#75706a"></div><div class="a" style="left:20.7px;top:9.0px;width:3.6px;height:10.8px;background:#8a847a"></div><div class="a" style="left:6.3px;top:14.4px;width:19.8px;height:14.4px;background:#7d7672;border-radius:8.1px 8.1px 0 0"></div><div class="a" style="left:10.3px;top:15.3px;width:2.9px;height:11.7px;background:#4c3d88"></div><div class="a" style="left:8.1px;top:3.6px;width:8.1px;height:10.3px;background:#d3a488;border-radius:45%"></div><div class="a" style="left:8.1px;top:2.7px;width:8.1px;height:3.6px;background:#4a3424;border-radius:3.6px 3.6px 1px 1px"></div></div>
<div class="a" style="left:407px;top:910px;width:776px;height:1px;background:#ebebeb"></div>
<div class="t" style="left:442.9px;top:882.7px;font-size:14.5px;color:#424242;font-weight:400;">14</div>
<div class="a" style="left:485px;top:881px;width:18px;height:18px;border-radius:50%;border:1.3px solid #616161"></div>
<div class="t" style="left:553.8px;top:880.5px;font-size:16px;color:#424242;font-weight:400;transform:scaleX(0.9429);">Business Strategy Landscape Review Complete</div>
<div class="a" style="left:1172px;top:873px;width:27px;height:27px;border-radius:50%;overflow:hidden;background:linear-gradient(135deg,#c9b9a5 0%,#a8a39a 50%,#8f8b86 100%)"><div class="a" style="left:2.7px;top:15.3px;width:21.6px;height:14.4px;background:#b7c6da;border-radius:9.0px 9.0px 0 0"></div><div class="a" style="left:8.6px;top:4.5px;width:9.9px;height:11.7px;background:#b88469;border-radius:45%"></div><div class="a" style="left:8.6px;top:3.1px;width:9.9px;height:4.5px;background:#2a2420;border-radius:4.5px 4.5px 1px 1px"></div></div>
<div class="a" style="left:407px;top:955px;width:776px;height:1px;background:#ebebeb"></div>
<div class="t" style="left:442.9px;top:927.7px;font-size:14.5px;color:#424242;font-weight:400;">15</div>
<div class="a" style="left:485px;top:926px;width:18px;height:18px;border-radius:50%;border:1.3px solid #616161"></div>
<svg style="left:523px;top:927px" width="7" height="11" viewBox="0 0 7 11" fill="none"><path d="M0.8 0.8l4.7 4.7-4.7 4.7" stroke="#242424" stroke-width="1.6"/></svg>
<div class="t" style="left:535.6px;top:925.7px;font-size:15.5px;color:#242424;font-weight:700;transform:scaleX(0.9885);">Develop Campaign Concepts</div>
<div class="a" style="left:407px;top:1000px;width:776px;height:1px;background:#ebebeb"></div>
<div class="t" style="left:442.9px;top:972.7px;font-size:14.5px;color:#424242;font-weight:400;">35</div>
<div class="a" style="left:485px;top:971px;width:18px;height:18px;border-radius:50%;border:1.3px solid #616161"></div>
<svg style="left:523px;top:972px" width="7" height="11" viewBox="0 0 7 11" fill="none"><path d="M0.8 0.8l4.7 4.7-4.7 4.7" stroke="#242424" stroke-width="1.6"/></svg>
<div class="t" style="left:535.6px;top:970.7px;font-size:15.5px;color:#242424;font-weight:700;transform:scaleX(0.9738);">Create Localization Strategy</div>
<div class="t" style="left:442.9px;top:1017.7px;font-size:14.5px;color:#424242;font-weight:400;">49</div>
<div class="a" style="left:485px;top:1016px;width:18px;height:18px;border-radius:50%;border:1.3px solid #616161"></div>
<svg style="left:523px;top:1017px" width="7" height="11" viewBox="0 0 7 11" fill="none"><path d="M0.8 0.8l4.7 4.7-4.7 4.7" stroke="#242424" stroke-width="1.6"/></svg>
<div class="t" style="left:535.6px;top:1015.7px;font-size:15.5px;color:#242424;font-weight:700;transform:scaleX(1.0115);">Internal Training and Communication</div>
<svg style="left:1026px;top:339px" width="18" height="18" viewBox="0 0 18 18" fill="none"><circle cx="9" cy="9" r="8.3" stroke="#424242" stroke-width="1.2"/><path d="M4.8 9.4l2.9 2.9 5.6-5.6" stroke="#424242" stroke-width="1.2"/></svg>
<div class="t" style="left:1050.8px;top:341.2px;font-size:15px;color:#424242;font-weight:400;transform:scaleX(1.0643);">0/2</div>
<svg style="left:1028px;top:385px" width="15" height="16" viewBox="0 0 15 16" fill="none"><path d="M0.6 0.6h13.8v14.8H4.8L0.6 11.2z" stroke="#424242" stroke-width="1.2"/><path d="M0.6 11.2h4.2v4.2" stroke="#424242" stroke-width="1.2"/></svg>
<svg style="left:1055px;top:384px" width="18" height="18" viewBox="0 0 18 18" fill="none"><circle cx="9" cy="9" r="8.3" stroke="#424242" stroke-width="1.2"/><path d="M4.8 9.4l2.9 2.9 5.6-5.6" stroke="#424242" stroke-width="1.2"/></svg>
<div class="t" style="left:1079.6px;top:386.2px;font-size:15px;color:#424242;font-weight:400;transform:scaleX(1.0739);">0/4</div>
<svg style="left:1026px;top:429px" width="18" height="18" viewBox="0 0 18 18" fill="none"><circle cx="9" cy="9" r="8.3" stroke="#424242" stroke-width="1.2"/><path d="M4.8 9.4l2.9 2.9 5.6-5.6" stroke="#424242" stroke-width="1.2"/></svg>
<div class="t" style="left:1050.8px;top:431.0px;font-size:15px;color:#424242;font-weight:400;transform:scaleX(1.0643);">0/2</div>
<div class="a" style="left:516px;top:505px;width:486px;height:45px;border:1px solid #5257a8"></div>
<svg style="left:939px;top:520px" width="18" height="18" viewBox="0 0 18 18" fill="none"><circle cx="9" cy="9" r="8.3" stroke="#5257a8" stroke-width="1.2"/><path d="M9 7.8v5.2" stroke="#5257a8" stroke-width="1.3"/><circle cx="9" cy="5.3" r=".8" fill="#5257a8"/></svg>
<svg style="left:978px;top:522px" width="4" height="16" viewBox="0 0 4 16" fill="none"><circle cx="2" cy="1.5" r="1.3" fill="#5257a8"/><circle cx="2" cy="8.3" r="1.3" fill="#5257a8"/><circle cx="2" cy="15.1" r="1.3" fill="#5257a8"/></svg>
<div class="a" style="left:407px;top:1034px;width:776px;height:1px;background:#ebebeb"></div>
<div class="a" style="left:407px;top:1035px;width:776px;height:45px;background:#fff"></div>
<svg style="left:486px;top:1050px" width="16" height="16" viewBox="0 0 16 16" fill="none"><path d="M8 0v16M0 8h16" stroke="#6264a7" stroke-width="1.3"/></svg>
<div class="t" style="left:533.2px;top:1049.9px;font-size:15.5px;color:#6264a7;font-weight:400;transform:scaleX(1.0047);">Add new task</div>
<div class="a" style="left:407px;top:1078px;width:776px;height:2px;background:#e6e6e6"></div>
<div class="a" style="left:1100px;top:56px;width:83px;height:1024px;background:linear-gradient(90deg,rgba(0,0,0,0),rgba(0,0,0,.03) 55%,rgba(0,0,0,.055) 85%,rgba(0,0,0,.10))"></div>
<div class="a" style="left:1183px;top:56px;width:382px;height:1024px;background:#fff"></div>
<div class="a" style="left:1183px;top:56px;width:1px;height:1024px;background:rgba(0,0,0,.06)"></div>
<svg style="left:1422px;top:73px" width="16" height="16" viewBox="0 0 16 16" fill="none"><path d="M1 15L15 1M15 1H9.5M15 1v5.5M1 15h5.5M1 15V9.5" stroke="#4f52b2" stroke-width="1.3" stroke-linecap="round" stroke-linejoin="round"/></svg>
<div class="a" style="left:1448px;top:63px;width:36px;height:36px;background:#ebebeb;border-radius:4px"></div>
<svg style="left:1456px;top:71px" width="20" height="20" viewBox="0 0 20 20" fill="none"><path d="M1.3 10.5A8.6 8.6 0 1 0 3.4 4.6" stroke="#4f52b2" stroke-width="1.3" stroke-linecap="round" stroke-linejoin="round"/><path d="M1.5 1.2v4.4h4.4" stroke="#4f52b2" stroke-width="1.3" stroke-linecap="round" stroke-linejoin="round"/><path d="M10 5.3v5l3.2 3.2" stroke="#4f52b2" stroke-width="1.3" stroke-linecap="round" stroke-linejoin="round"/></svg>
<svg style="left:1495px;top:79px" width="15" height="3" viewBox="0 0 15 3" fill="none"><circle cx="1.5" cy="1.5" r="1.5" fill="#4f52b2"/><circle cx="7.5" cy="1.5" r="1.5" fill="#4f52b2"/><circle cx="13.5" cy="1.5" r="1.5" fill="#4f52b2"/></svg>
<svg style="left:1531px;top:74px" width="14" height="14" viewBox="0 0 14 14" fill="none"><path d="M0.8 0.8l12.4 12.4M13.2 0.8L0.8 13.2" stroke="#4f52b2" stroke-width="1.3" stroke-linecap="round" stroke-linejoin="round"/></svg>
<div class="t" style="left:1219.0px;top:118.8px;font-size:13.5px;color:#5b5fc7;font-weight:400;transform:scaleX(0.9737);">Review Business Strategy</div>
<div class="a" style="left:1219px;top:146px;width:23px;height:23px;border-radius:50%;border:1.5px solid #616161"></div>
<div class="t" style="left:1256.4px;top:146.5px;font-size:21.5px;color:#242424;font-weight:700;transform:scaleX(0.9886);">Review local marketing ...</div>
<svg style="left:1219px;top:197px" width="18" height="18" viewBox="0 0 18 18" fill="none"><circle cx="7" cy="5" r="4.2" stroke="#424242" stroke-width="1.3"/><path d="M0.8 16.5a6.5 6.5 0 0 1 10-5.5" stroke="#424242" stroke-width="1.3"/><path d="M14 11.5v6M11 14.5h6" stroke="#424242" stroke-width="1.3"/></svg>
<div class="a" style="left:1255px;top:194px;width:27px;height:27px;border-radius:50%;overflow:hidden;background:linear-gradient(180deg,#f4f1ea,#e6e2da)"><div class="a" style="left:1.8px;top:14.4px;width:4.5px;height:8.1px;background:#c9d85e"></div><div class="a" style="left:5.4px;top:11.2px;width:19.8px;height:2.0px;background:#75706a"></div><div class="a" style="left:20.7px;top:9.0px;width:3.6px;height:10.8px;background:#8a847a"></div><div class="a" style="left:6.3px;top:14.4px;width:19.8px;height:14.4px;background:#7d7672;border-radius:8.1px 8.1px 0 0"></div><div class="a" style="left:10.3px;top:15.3px;width:2.9px;height:11.7px;background:#4c3d88"></div><div class="a" style="left:8.1px;top:3.6px;width:8.1px;height:10.3px;background:#d3a488;border-radius:45%"></div><div class="a" style="left:8.1px;top:2.7px;width:8.1px;height:3.6px;background:#4a3424;border-radius:3.6px 3.6px 1px 1px"></div></div>
<div class="t" style="left:1293.0px;top:201.0px;font-size:15.5px;color:#242424;font-weight:400;">Alex Wilber</div>
<svg style="left:1219px;top:238px" width="17" height="17" viewBox="0 0 17 17" fill="none"><path d="M9.5 0.8h6.7v6.7L7.7 16.2 0.8 9.3z" stroke="#424242" stroke-width="1.3" stroke-linejoin="round"/><circle cx="12.8" cy="4.2" r="1.1" fill="#424242"/></svg>
<div class="a" style="left:1246px;top:234px;width:196px;height:27px;background:#fbddf0;border-radius:4px"></div>
<div class="t" style="left:1256.4px;top:239.5px;font-size:15.5px;color:#b4399c;font-weight:400;">Requires legal signoff</div>
<svg style="left:1421px;top:243px" width="13" height="13" viewBox="0 0 13 13" fill="none"><path d="M0.6 0.6l11.8 11.8M12.4 0.6L0.6 12.4" stroke="#b4399c" stroke-width="1.3"/></svg>
<div class="t" style="left:1228.0px;top:293.7px;font-size:16px;color:#22884a;font-weight:400;transform:scaleX(0.9511);">Add a note...</div>
<div class="t" style="left:1219.0px;top:347.6px;font-size:15.5px;color:#333;font-weight:700;transform:scaleX(0.9483);">Start</div>
<div class="a" style="left:1219px;top:374px;width:310px;height:36px;border:1px solid #8f8f8f;border-radius:3px;background:#fff"></div>
<div class="t" style="left:1228.0px;top:384.9px;font-size:15.5px;color:#242424;font-weight:400;transform:scaleX(1.0235);">07/22/2024</div>
<div class="t" style="left:1219.0px;top:437.6px;font-size:15.5px;color:#333;font-weight:700;transform:scaleX(0.8764);">Finish</div>
<div class="a" style="left:1219px;top:464px;width:310px;height:36px;border:1px solid #8f8f8f;border-radius:3px;background:#fff"></div>
<div class="t" style="left:1228.0px;top:474.9px;font-size:15.5px;color:#242424;font-weight:400;transform:scaleX(1.0235);">07/22/2024</div>
<div class="t" style="left:1219.0px;top:527.6px;font-size:15.5px;color:#333;font-weight:700;transform:scaleX(0.9730);">Duration</div>
<div class="a" style="left:1219px;top:554px;width:310px;height:36px;border:1px solid #8f8f8f;border-radius:3px;background:#fff"></div>
<div class="t" style="left:1228.0px;top:564.9px;font-size:15.5px;color:#242424;font-weight:400;transform:scaleX(0.9757);">1 day</div>
<div class="t" style="left:1219.0px;top:610.8px;font-size:15.5px;color:#333;font-weight:700;transform:scaleX(0.9694);">% Complete</div>
<div class="a" style="left:1219px;top:639px;width:310px;height:36px;border:1px solid #8f8f8f;border-radius:3px;background:#fff"></div>
<div class="t" style="left:1228.0px;top:649.9px;font-size:15.5px;color:#242424;font-weight:400;transform:scaleX(1.0435);">0</div>
<svg style="left:1511px;top:646px" width="9" height="5" viewBox="0 0 9 5" fill="none"><path d="M0.6 4.4l3.9-3.8 3.9 3.8" stroke="#424242" stroke-width="1.1"/></svg>
<svg style="left:1511px;top:661px" width="9" height="5" viewBox="0 0 9 5" fill="none"><path d="M0.6 0.6l3.9 3.8 3.9-3.8" stroke="#424242" stroke-width="1.1"/></svg>
<div class="t" style="left:1219.0px;top:696.9px;font-size:15.5px;color:#333;font-weight:700;transform:scaleX(0.9093);">Bucket</div>
<div class="a" style="left:1219px;top:723px;width:310px;height:36px;border:1px solid #8f8f8f;border-radius:3px;background:#fff"></div>
<div class="t" style="left:1228.0px;top:733.9px;font-size:15.5px;color:#242424;font-weight:400;transform:scaleX(0.9919);">Develop Campaign Concepts</div>
<svg style="left:1506px;top:736px" width="14" height="8" viewBox="0 0 14 8" fill="none"><path d="M0.7 0.7l6.3 6.3 6.3-6.3" stroke="#424242" stroke-width="1.2"/></svg>
<div class="t" style="left:1219.0px;top:780.8px;font-size:15.5px;color:#333;font-weight:700;transform:scaleX(0.9767);">Priority</div>
<div class="a" style="left:1219px;top:807px;width:310px;height:36px;border:1px solid #8f8f8f;border-radius:3px;background:#fff"></div>
<div class="t" style="left:1265.0px;top:817.9px;font-size:15.5px;color:#242424;font-weight:400;transform:scaleX(1.0537);">Important</div>
<svg style="left:1506px;top:820px" width="14" height="8" viewBox="0 0 14 8" fill="none"><path d="M0.7 0.7l6.3 6.3 6.3-6.3" stroke="#424242" stroke-width="1.2"/></svg>
<div class="a" style="left:1235.5px;top:816px;width:3px;height:11px;background:#d13438;border-radius:1px"></div>
<div class="a" style="left:1235.5px;top:829px;width:3px;height:3px;background:#d13438;border-radius:50%"></div>
<div class="t" style="left:1219.0px;top:864.6px;font-size:15.5px;color:#333;font-weight:700;transform:scaleX(0.8932);">Sprint</div>
<div class="a" style="left:1219px;top:891px;width:310px;height:36px;border:1px solid #8f8f8f;border-radius:3px;background:#fff"></div>
<div class="t" style="left:1228.0px;top:901.9px;font-size:15.5px;color:#242424;font-weight:400;transform:scaleX(0.9609);">Backlog</div>
<svg style="left:1506px;top:904px" width="14" height="8" viewBox="0 0 14 8" fill="none"><path d="M0.7 0.7l6.3 6.3 6.3-6.3" stroke="#424242" stroke-width="1.2"/></svg>
<svg style="left:1223px;top:971px" width="14" height="8" viewBox="0 0 14 8" fill="none"><path d="M0.7 0.7l6.3 6.3 6.3-6.3" stroke="#242424" stroke-width="1.3"/></svg>
<div class="t" style="left:1250.2px;top:967.8px;font-size:15.5px;color:#111;font-weight:700;transform:scaleX(0.9228);">Checklist</div>
<div class="a" style="left:1221px;top:1011px;width:18px;height:18px;border-radius:50%;border:1px solid #b3b3b3"></div>
<div class="t" style="left:1249.3px;top:1013.8px;font-size:16px;color:#707070;font-weight:400;transform:scaleX(0.9872);">Add an item</div>
<div class="a" style="left:1183px;top:1078px;width:382px;height:2px;background:#e6e6e6"></div>
<div class="a" style="left:1261px;top:1077px;width:3px;height:2px;background:#555"></div>
<div class="a" style="left:1266px;top:1077px;width:3px;height:2px;background:#555"></div>
<div class="t" style="left:1584.0px;top:81.7px;font-size:17px;color:#242424;font-weight:700;transform:scaleX(0.8496);">Changes</div>
<svg style="left:1884px;top:84px" width="14" height="14" viewBox="0 0 14 14" fill="none"><path d="M0.7 0.7l12.6 12.6M13.3 0.7L0.7 13.3" stroke="#5b5fc7" stroke-width="1.3"/></svg>
<div class="a" style="left:1584px;top:127px;width:324px;height:189.5px;background:#fff"></div>
<div class="a" style="left:1598px;top:143px;width:18px;height:18px;border-radius:50%;overflow:hidden;background:linear-gradient(135deg,#c9b9a5 0%,#a8a39a 50%,#8f8b86 100%)"><div class="a" style="left:1.8px;top:10.2px;width:14.4px;height:9.6px;background:#b7c6da;border-radius:6.0px 6.0px 0 0"></div><div class="a" style="left:5.7px;top:3.0px;width:6.6px;height:7.8px;background:#b88469;border-radius:45%"></div><div class="a" style="left:5.7px;top:2.1px;width:6.6px;height:3.0px;background:#2a2420;border-radius:3.0px 3.0px 1px 1px"></div></div>
<div class="t" style="left:1629.0px;top:145.2px;font-size:15.5px;color:#242424;font-weight:400;transform:scaleX(0.9912);">Diego Siciliani</div>
<div class="t" style="left:1815.4px;top:147.1px;font-size:13.5px;color:#616161;font-weight:400;">A minute ago</div>
<div class="t" style="left:1629.6px;top:175.6px;font-size:13.5px;color:#616161;font-weight:400;transform:scaleX(0.9717);">Edited earlier task</div>
<svg style="left:1604px;top:191px" width="16" height="16" viewBox="0 0 16 16" fill="none"><path d="M11.8 1.3a2 2 0 0 1 2.9 2.9L4.6 14.3 0.8 15.2l0.9-3.8z" stroke="#424242" stroke-width="1.2" stroke-linecap="round" stroke-linejoin="round"/><path d="M10.3 2.8l2.9 2.9" stroke="#424242" stroke-width="1.2" stroke-linecap="round" stroke-linejoin="round"/></svg>
<div class="t" style="left:1629.6px;top:193.4px;font-size:13.5px;color:#242424;font-weight:700;transform:scaleX(0.9492);text-decoration:underline;text-underline-offset:1px">Review organizational marketing strategy,</div>
<div class="t" style="left:1629.6px;top:212.2px;font-size:13.5px;color:#242424;font-weight:700;transform:scaleX(0.9550);">Duration</div>
<svg style="left:1604px;top:238px" width="15" height="15" viewBox="0 0 15 15" fill="none"><circle cx="7.5" cy="7.5" r="6.8" stroke="#424242" stroke-width="1.2" stroke-linecap="round" stroke-linejoin="round"/><path d="M7.5 4v4.3" stroke="#424242" stroke-width="1.2" stroke-linecap="round" stroke-linejoin="round"/><circle cx="7.5" cy="10.8" r=".7" fill="#424242"/></svg>
<div class="t" style="left:1629.6px;top:239.2px;font-size:13.5px;color:#616161;font-weight:400;transform:scaleX(0.9850);">Impacted</div>
<div class="t" style="left:1688.5px;top:239.2px;font-size:13.5px;color:#242424;font-weight:700;transform:scaleX(0.9459);">Start</div>
<svg style="left:1627px;top:266.8px" width="11" height="11" viewBox="0 0 11 11" fill="none"><circle cx="5.5" cy="5.5" r="4.8" stroke="#242424" stroke-width="1.2"/><circle cx="5.5" cy="5.5" r="2.3" fill="#242424"/></svg>
<div class="a" style="left:1632px;top:278.5px;width:1px;height:12px;background:repeating-linear-gradient(180deg,#8a8a8a 0 2px,transparent 2px 4px)"></div>
<div class="a" style="left:1631px;top:292px;width:4px;height:4px;background:#616161;border-radius:50%"></div>
<div class="t" style="left:1646.7px;top:266.6px;font-size:13.5px;color:#242424;font-weight:400;">07/22/2024</div>
<div class="t" style="left:1646.7px;top:288.4px;font-size:13.5px;color:#616161;font-weight:400;">07/16/2024</div>
<div class="a" style="left:1584px;top:326px;width:324px;height:125.80000000000001px;background:#fff"></div>
<div class="a" style="left:1598px;top:342px;width:18px;height:18px;border-radius:50%;overflow:hidden;background:linear-gradient(180deg,#f4f1ea,#e6e2da)"><div class="a" style="left:1.2px;top:9.6px;width:3.0px;height:5.4px;background:#c9d85e"></div><div class="a" style="left:3.6px;top:7.5px;width:13.2px;height:1.3px;background:#75706a"></div><div class="a" style="left:13.8px;top:6.0px;width:2.4px;height:7.2px;background:#8a847a"></div><div class="a" style="left:4.2px;top:9.6px;width:13.2px;height:9.6px;background:#7d7672;border-radius:5.4px 5.4px 0 0"></div><div class="a" style="left:6.9px;top:10.2px;width:1.9px;height:7.8px;background:#4c3d88"></div><div class="a" style="left:5.4px;top:2.4px;width:5.4px;height:6.9px;background:#d3a488;border-radius:45%"></div><div class="a" style="left:5.4px;top:1.8px;width:5.4px;height:2.4px;background:#4a3424;border-radius:2.4px 2.4px 1px 1px"></div></div>
<div class="t" style="left:1629.0px;top:344.2px;font-size:15.5px;color:#242424;font-weight:400;">Alex Wilber</div>
<div class="t" style="left:1815.4px;top:346.1px;font-size:13.5px;color:#616161;font-weight:400;">A minute ago</div>
<svg style="left:1604px;top:372px" width="16" height="16" viewBox="0 0 16 16" fill="none"><path d="M11.8 1.3a2 2 0 0 1 2.9 2.9L4.6 14.3 0.8 15.2l0.9-3.8z" stroke="#424242" stroke-width="1.2" stroke-linecap="round" stroke-linejoin="round"/><path d="M10.3 2.8l2.9 2.9" stroke="#424242" stroke-width="1.2" stroke-linecap="round" stroke-linejoin="round"/></svg>
<div class="t" style="left:1629.6px;top:375.3px;font-size:13.5px;color:#616161;font-weight:400;transform:scaleX(0.9456);">Edited</div>
<div class="t" style="left:1671.0px;top:375.3px;font-size:13.5px;color:#242424;font-weight:700;transform:scaleX(0.9309);">Priority</div>
<svg style="left:1627px;top:401.8px" width="11" height="11" viewBox="0 0 11 11" fill="none"><circle cx="5.5" cy="5.5" r="4.8" stroke="#242424" stroke-width="1.2"/><circle cx="5.5" cy="5.5" r="2.3" fill="#242424"/></svg>
<div class="a" style="left:1632px;top:413.5px;width:1px;height:12px;background:repeating-linear-gradient(180deg,#8a8a8a 0 2px,transparent 2px 4px)"></div>
<div class="a" style="left:1631px;top:427px;width:4px;height:4px;background:#616161;border-radius:50%"></div>
<div class="t" style="left:1646.7px;top:401.6px;font-size:13.5px;color:#242424;font-weight:400;transform:scaleX(1.0345);">Important</div>
<div class="t" style="left:1646.7px;top:423.4px;font-size:13.5px;color:#616161;font-weight:400;transform:scaleX(1.0205);">Medium</div>
<div class="a" style="left:1584px;top:461px;width:324px;height:125.70000000000005px;background:#fff"></div>
<div class="a" style="left:1598px;top:477px;width:18px;height:18px;border-radius:50%;overflow:hidden;background:linear-gradient(180deg,#f4f1ea,#e6e2da)"><div class="a" style="left:1.2px;top:9.6px;width:3.0px;height:5.4px;background:#c9d85e"></div><div class="a" style="left:3.6px;top:7.5px;width:13.2px;height:1.3px;background:#75706a"></div><div class="a" style="left:13.8px;top:6.0px;width:2.4px;height:7.2px;background:#8a847a"></div><div class="a" style="left:4.2px;top:9.6px;width:13.2px;height:9.6px;background:#7d7672;border-radius:5.4px 5.4px 0 0"></div><div class="a" style="left:6.9px;top:10.2px;width:1.9px;height:7.8px;background:#4c3d88"></div><div class="a" style="left:5.4px;top:2.4px;width:5.4px;height:6.9px;background:#d3a488;border-radius:45%"></div><div class="a" style="left:5.4px;top:1.8px;width:5.4px;height:2.4px;background:#4a3424;border-radius:2.4px 2.4px 1px 1px"></div></div>
<div class="t" style="left:1629.0px;top:479.2px;font-size:15.5px;color:#242424;font-weight:400;">Alex Wilber</div>
<div class="t" style="left:1815.4px;top:481.1px;font-size:13.5px;color:#616161;font-weight:400;">A minute ago</div>
<svg style="left:1604px;top:506px" width="16" height="16" viewBox="0 0 16 16" fill="none"><path d="M11.8 1.3a2 2 0 0 1 2.9 2.9L4.6 14.3 0.8 15.2l0.9-3.8z" stroke="#424242" stroke-width="1.2" stroke-linecap="round" stroke-linejoin="round"/><path d="M10.3 2.8l2.9 2.9" stroke="#424242" stroke-width="1.2" stroke-linecap="round" stroke-linejoin="round"/></svg>
<div class="t" style="left:1629.6px;top:510.1px;font-size:13.5px;color:#616161;font-weight:400;transform:scaleX(0.9456);">Edited</div>
<div class="t" style="left:1671.0px;top:510.1px;font-size:13.5px;color:#242424;font-weight:700;transform:scaleX(0.9219);">Bucket</div>
<svg style="left:1627px;top:537.5px" width="11" height="11" viewBox="0 0 11 11" fill="none"><circle cx="5.5" cy="5.5" r="4.8" stroke="#242424" stroke-width="1.2"/><circle cx="5.5" cy="5.5" r="2.3" fill="#242424"/></svg>
<div class="a" style="left:1632px;top:549.2px;width:1px;height:12px;background:repeating-linear-gradient(180deg,#8a8a8a 0 2px,transparent 2px 4px)"></div>
<div class="a" style="left:1631px;top:562.7px;width:4px;height:4px;background:#616161;border-radius:50%"></div>
<div class="t" style="left:1646.7px;top:537.3px;font-size:13.5px;color:#242424;font-weight:400;">Develop Campaign Concepts</div>
<div class="t" style="left:1646.7px;top:559.1px;font-size:13.5px;color:#616161;font-weight:400;transform:scaleX(0.9437);">Review Business Strategy</div>
<div class="a" style="left:1584px;top:596px;width:324px;height:115.39999999999998px;background:#fff"></div>
<div class="a" style="left:1598px;top:612px;width:18px;height:18px;border-radius:50%;overflow:hidden;background:linear-gradient(180deg,#f4f1ea,#e6e2da)"><div class="a" style="left:1.2px;top:9.6px;width:3.0px;height:5.4px;background:#c9d85e"></div><div class="a" style="left:3.6px;top:7.5px;width:13.2px;height:1.3px;background:#75706a"></div><div class="a" style="left:13.8px;top:6.0px;width:2.4px;height:7.2px;background:#8a847a"></div><div class="a" style="left:4.2px;top:9.6px;width:13.2px;height:9.6px;background:#7d7672;border-radius:5.4px 5.4px 0 0"></div><div class="a" style="left:6.9px;top:10.2px;width:1.9px;height:7.8px;background:#4c3d88"></div><div class="a" style="left:5.4px;top:2.4px;width:5.4px;height:6.9px;background:#d3a488;border-radius:45%"></div><div class="a" style="left:5.4px;top:1.8px;width:5.4px;height:2.4px;background:#4a3424;border-radius:2.4px 2.4px 1px 1px"></div></div>
<div class="t" style="left:1629.0px;top:614.2px;font-size:15.5px;color:#242424;font-weight:400;">Alex Wilber</div>
<div class="t" style="left:1775.4px;top:616.1px;font-size:13.5px;color:#616161;font-weight:400;transform:scaleX(0.9669);">Several minutes ago</div>
<svg style="left:1605px;top:643px" width="14" height="14" viewBox="0 0 14 14" fill="none"><circle cx="7" cy="7" r="6.3" stroke="#424242" stroke-width="1.2" stroke-linecap="round" stroke-linejoin="round"/><path d="M7 4v6M4 7h6" stroke="#424242" stroke-width="1.2" stroke-linecap="round" stroke-linejoin="round"/></svg>
<div class="t" style="left:1629.6px;top:645.3px;font-size:13.5px;color:#616161;font-weight:400;transform:scaleX(1.0244);">Added</div>
<div class="t" style="left:1673.5px;top:645.3px;font-size:13.5px;color:#242424;font-weight:700;transform:scaleX(0.9493);">Attachment</div>
<svg style="left:1627px;top:671px" width="17" height="16" viewBox="0 0 17 16" fill="none"><path d="M5 0.5h7.5l4 4v11H5z" fill="#fff" stroke="#8a8a8a" stroke-width="1"/><rect x="0.5" y="4.5" width="9" height="8" rx="1" fill="#185abd"/><path d="M2 6.5l1 4.2 1.5-3 1.5 3 1-4.2" stroke="#fff" stroke-width=".9"/><path d="M11 8h4M11 10.5h4" stroke="#2b7cd3" stroke-width="1"/></svg>
<div class="t" style="left:1655.4px;top:672.1px;font-size:16px;color:#4f52b2;font-weight:400;transform:scaleX(0.9593);">Review local marketing strategy....</div>
<div class="a" style="left:1584px;top:721px;width:324px;height:117px;background:#fff"></div>
<div class="a" style="left:1598px;top:737px;width:18px;height:18px;border-radius:50%;overflow:hidden;background:linear-gradient(180deg,#f4f1ea,#e6e2da)"><div class="a" style="left:1.2px;top:9.6px;width:3.0px;height:5.4px;background:#c9d85e"></div><div class="a" style="left:3.6px;top:7.5px;width:13.2px;height:1.3px;background:#75706a"></div><div class="a" style="left:13.8px;top:6.0px;width:2.4px;height:7.2px;background:#8a847a"></div><div class="a" style="left:4.2px;top:9.6px;width:13.2px;height:9.6px;background:#7d7672;border-radius:5.4px 5.4px 0 0"></div><div class="a" style="left:6.9px;top:10.2px;width:1.9px;height:7.8px;background:#4c3d88"></div><div class="a" style="left:5.4px;top:2.4px;width:5.4px;height:6.9px;background:#d3a488;border-radius:45%"></div><div class="a" style="left:5.4px;top:1.8px;width:5.4px;height:2.4px;background:#4a3424;border-radius:2.4px 2.4px 1px 1px"></div></div>
<div class="t" style="left:1629.0px;top:739.2px;font-size:15.5px;color:#242424;font-weight:400;">Alex Wilber</div>
<div class="t" style="left:1775.4px;top:741.1px;font-size:13.5px;color:#616161;font-weight:400;transform:scaleX(0.9669);">Several minutes ago</div>
<svg style="left:1605px;top:768px" width="14" height="14" viewBox="0 0 14 14" fill="none"><circle cx="7" cy="7" r="6.3" stroke="#424242" stroke-width="1.2" stroke-linecap="round" stroke-linejoin="round"/><path d="M7 4v6M4 7h6" stroke="#424242" stroke-width="1.2" stroke-linecap="round" stroke-linejoin="round"/></svg>
<div class="t" style="left:1629.6px;top:769.8px;font-size:13.5px;color:#616161;font-weight:400;transform:scaleX(1.0244);">Added</div>
<div class="t" style="left:1673.5px;top:769.8px;font-size:13.5px;color:#242424;font-weight:700;transform:scaleX(0.8932);">Label</div>
<div class="a" style="left:1627px;top:793px;width:145px;height:23px;background:#fbddf0;border-radius:4px"></div>
<div class="t" style="left:1636.0px;top:799.6px;font-size:13.5px;color:#b4399c;font-weight:400;transform:scaleX(0.9777);">Requires legal signoff</div>
</body></html>
